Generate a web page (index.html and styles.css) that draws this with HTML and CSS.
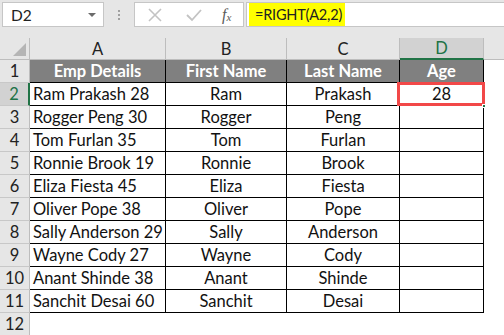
FILE: index.html
```html
<!DOCTYPE html>
<html>
<head>
<meta charset="utf-8">
<link rel="stylesheet" href="styles.css">
</head>
<body>
<div class="topbar">
  <div class="namebox"><span class="name">D2</span><span class="caret"></span></div>
  <div class="dots"><i></i><i></i><i></i></div>
  <div class="fxbox">
    <svg class="ic cancel" width="14" height="14" viewBox="0 0 14 14"><path d="M1 1 L13 13 M13 1 L1 13" stroke="#c3c3c3" stroke-width="1.6" fill="none"/></svg>
    <svg class="ic ok" width="16" height="14" viewBox="0 0 16 14"><path d="M1 7 L6 12 L15 2" stroke="#c3c3c3" stroke-width="1.8" fill="none"/></svg>
    <span class="fx">f<sub>x</sub></span>
  </div>
  <div class="input"><span class="formula">=RIGHT(A2,2)</span></div>
</div>
<div class="sheet">
  <div class="corner"><span class="tri"></span></div>
  <div class="colh">A</div>
  <div class="colh">B</div>
  <div class="colh">C</div>
  <div class="colh sel">D</div>
  <div class="colh rest"></div>

  <div class="rowh">1</div>
  <div class="c hd">Emp Details</div>
  <div class="c hd">First Name</div>
  <div class="c hd">Last Name</div>
  <div class="c hd">Age</div>
  <div class="e"></div>

  <div class="rowh sel">2</div>
  <div class="c l">Ram Prakash 28</div>
  <div class="c">Ram</div>
  <div class="c">Prakash</div>
  <div class="c active">28<span class="selbox"></span><span class="handle"></span></div>
  <div class="e"></div>

  <div class="rowh">3</div>
  <div class="c l">Rogger Peng 30</div>
  <div class="c">Rogger</div>
  <div class="c">Peng</div>
  <div class="c"></div>
  <div class="e"></div>

  <div class="rowh">4</div>
  <div class="c l">Tom Furlan 35</div>
  <div class="c">Tom</div>
  <div class="c">Furlan</div>
  <div class="c"></div>
  <div class="e"></div>

  <div class="rowh">5</div>
  <div class="c l">Ronnie Brook 19</div>
  <div class="c">Ronnie</div>
  <div class="c">Brook</div>
  <div class="c"></div>
  <div class="e"></div>

  <div class="rowh">6</div>
  <div class="c l">Eliza Fiesta 45</div>
  <div class="c">Eliza</div>
  <div class="c">Fiesta</div>
  <div class="c"></div>
  <div class="e"></div>

  <div class="rowh">7</div>
  <div class="c l">Oliver Pope 38</div>
  <div class="c">Oliver</div>
  <div class="c">Pope</div>
  <div class="c"></div>
  <div class="e"></div>

  <div class="rowh">8</div>
  <div class="c l">Sally Anderson 29</div>
  <div class="c">Sally</div>
  <div class="c">Anderson</div>
  <div class="c"></div>
  <div class="e"></div>

  <div class="rowh">9</div>
  <div class="c l">Wayne Cody 27</div>
  <div class="c">Wayne</div>
  <div class="c">Cody</div>
  <div class="c"></div>
  <div class="e"></div>

  <div class="rowh">10</div>
  <div class="c l">Anant Shinde 38</div>
  <div class="c">Anant</div>
  <div class="c">Shinde</div>
  <div class="c"></div>
  <div class="e"></div>

  <div class="rowh">11</div>
  <div class="c l">Sanchit Desai 60</div>
  <div class="c">Sanchit</div>
  <div class="c">Desai</div>
  <div class="c"></div>
  <div class="e"></div>

  <div class="rowh">12</div>
  <div class="e"></div>
  <div class="e"></div>
  <div class="e"></div>
  <div class="e"></div>
  <div class="e"></div>
</div>
</body>
</html>
```
FILE: styles.css
```css
* { box-sizing: border-box; }
html, body { margin: 0; padding: 0; }
body {
  width: 504px;
  height: 335px;
  overflow: hidden;
  background: #ffffff;
  font-family: Lato, "Liberation Sans", sans-serif;
  color: #000;
}
.topbar {
  height: 38px;
  background: #e6e6e6;
  display: flex;
  align-items: flex-start;
  padding-top: 2px;
}
.namebox {
  margin-left: 2px;
  width: 102px;
  height: 25px;
  background: #fff;
  border: 1px solid #c6c6c6;
  display: flex;
  align-items: center;
  justify-content: space-between;
  padding: 0 7px 0 8px;
}
.name { font-size: 15.5px; color: #222; }
.caret {
  width: 0; height: 0;
  border-left: 4px solid transparent;
  border-right: 4px solid transparent;
  border-top: 4px solid #6b6b6b;
}
.dots {
  width: 30px;
  height: 25px;
  display: flex;
  flex-direction: column;
  align-items: center;
  justify-content: center;
  gap: 2px;
}
.dots i { display: block; width: 2px; height: 2px; background: #a0a0a0; }
.fxbox {
  width: 110px;
  height: 25px;
  background: #fff;
  border: 1px solid #c6c6c6;
  display: flex;
  align-items: center;
  padding-left: 13px;
}
.ic { display: block; }
.cancel { margin-right: 24px; }
.ok { margin-right: 20px; }
.fx { font-family: "Liberation Serif", serif; font-style: italic; font-size: 16px; color: #5a5a5a; }
.fx sub { font-size: 11px; vertical-align: -1px; }
.input {
  margin-left: 2px;
  flex: 1;
  height: 25px;
  background: #fff;
  border: 1px solid #c6c6c6;
  border-right: none;
  padding: 0 0 0 2px;
  display: flex;
  align-items: center;
}
.formula {
  background: #ffff00;
  height: 23px;
  width: 96px;
  display: flex;
  align-items: center;
  padding-left: 6px;
  font-size: 14.5px;
  letter-spacing: -0.2px;
  color: #222;
  white-space: nowrap;
}
.sheet {
  display: grid;
  grid-template-columns: 30px 136px 121px 113px 84px 1fr;
  grid-template-rows: 22px;
  grid-auto-rows: 23px;
  font-size: 16.5px;
}
.corner {
  background: #e6e6e6;
  border-right: 1px solid #bdbdbd;
  border-bottom: 1px solid #bdbdbd;
  position: relative;
}
.tri {
  position: absolute;
  right: 3px;
  bottom: 3px;
  width: 0; height: 0;
  border-left: 13px solid transparent;
  border-bottom: 13px solid #b5b5b5;
}
.colh {
  background: #e6e6e6;
  border-right: 1px solid #bdbdbd;
  border-bottom: 1px solid #bdbdbd;
  display: flex;
  align-items: center;
  justify-content: center;
  color: #222;
  font-size: 16.5px;
}
.colh.sel {
  background: #d2d2d2;
  color: #217346;
  border-bottom: 2px solid #217346;
}
.colh.rest { border-right: none; }
.rowh {
  background: #e6e6e6;
  border-right: 1px solid #bdbdbd;
  border-bottom: 1px solid #c8c8c8;
  display: flex;
  align-items: center;
  justify-content: center;
  color: #222;
  font-size: 16.5px;
}
.rowh.sel {
  background: #d2d2d2;
  color: #217346;
  border-right: 2px solid #217346;
}
.c {
  border-right: 1px solid #000;
  border-bottom: 1px solid #000;
  display: flex;
  align-items: center;
  justify-content: center;
  color: #111;
  white-space: nowrap;
}
.c.l { justify-content: flex-start; padding-left: 3px; }
.c.hd {
  background: #808080;
  color: #fff;
  font-weight: bold;
}
.c.active { position: relative; }
.selbox {
  position: absolute;
  top: -1px;
  left: -3px;
  right: -2px;
  bottom: -1px;
  border: 3px solid #f24848;
}
.handle {
  position: absolute;
  right: -3px;
  bottom: -3px;
  width: 4px;
  height: 4px;
  background: #217346;
  border: 1px solid #fff;
}
.e { }
```
